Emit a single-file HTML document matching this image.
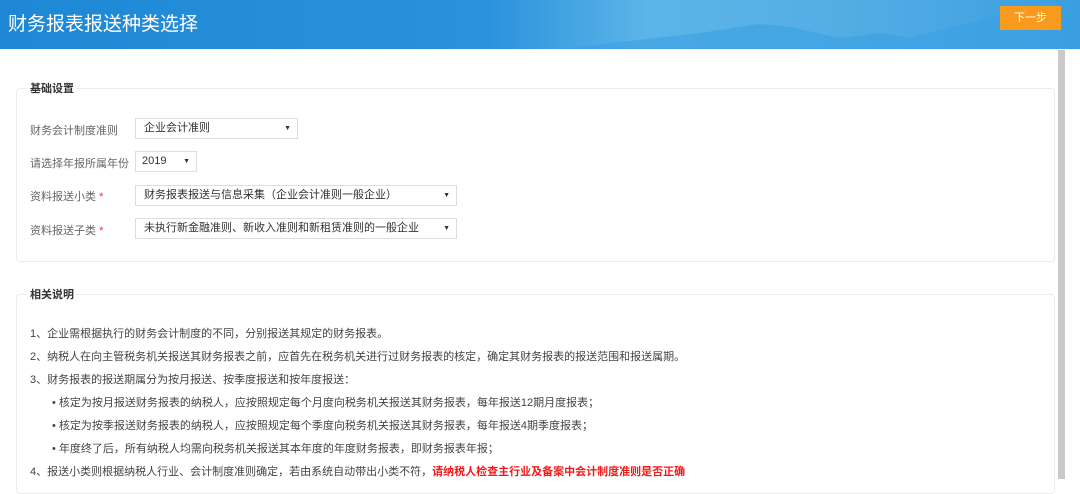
<!DOCTYPE html>
<html><head><meta charset="utf-8"><style>
*{margin:0;padding:0;box-sizing:border-box}
body{width:1080px;height:479px;overflow:hidden;background:#fff;font-family:"Liberation Sans","Noto Sans CJK SC",sans-serif;color:#555;font-size:11px;position:relative}
.hdr{position:absolute;left:0;top:0;width:1080px;height:49px;background:linear-gradient(90deg,#1e88d6 0%,#2a92dc 45%,#5db4e8 60%,#52ace4 80%,#3a9ee0 100%);overflow:hidden}
.hdr h1{position:absolute;left:8px;top:9px;font-size:19px;font-weight:normal;color:#fff}
.btn{position:absolute;left:1000px;top:6px;width:61px;height:24px;background:#f89a1c;color:#fff;font-size:11px;text-align:center;line-height:24px}
.sb{position:absolute;left:1058px;top:50px;width:7px;height:429px;background:#c9c9c9}
.box{position:absolute;left:16px;width:1039px;border:1px solid #ececec;border-radius:4px}
.lg{position:absolute;left:10px;top:-9px;background:#fff;padding:0 3px;font-weight:bold;color:#333;font-size:11px}
.lbl{position:absolute;left:30px;color:#666;font-size:11px}
.sel{position:absolute;left:135px;height:21px;border:1px solid #ddd;color:#333;padding-left:8px;line-height:19px;font-size:11px}
.sel:after{content:"▼";position:absolute;right:6px;top:0;font-size:7px;color:#333}
.req{color:#e33}
.t{position:absolute;left:30px;font-size:11px;color:#444;white-space:nowrap}
.b{left:52px}
.red{color:#f01a1a;font-weight:bold}
</style></head><body>
<div class="hdr">
<svg width="1080" height="49" style="position:absolute;left:0;top:0">
<path d="M560 49 L700 33 L760 24 L790 27 L840 38 L880 33 L910 38 L960 25 L1000 15 L1030 10 L1060 15 L1080 22 L1080 49Z" fill="#3aa0e2" opacity="0.6"/>
</svg>
<h1>财务报表报送种类选择</h1>
<div class="btn">下一步</div>
</div>
<div class="sb"></div>
<div class="box" style="top:88px;height:174px"><div class="lg">基础设置</div></div>
<div class="lbl" style="top:122px">财务会计制度准则</div>
<div class="sel" style="top:118px;width:163px">企业会计准则</div>
<div class="lbl" style="top:155px">请选择年报所属年份</div>
<div class="sel" style="top:151px;width:62px;padding-left:6px">2019</div>
<div class="lbl" style="top:188px">资料报送小类 <span class="req">*</span></div>
<div class="sel" style="top:185px;width:322px">财务报表报送与信息采集（企业会计准则一般企业）</div>
<div class="lbl" style="top:222px">资料报送子类 <span class="req">*</span></div>
<div class="sel" style="top:218px;width:322px">未执行新金融准则、新收入准则和新租赁准则的一般企业</div>
<div class="box" style="top:294px;height:200px"><div class="lg">相关说明</div></div>
<div class="t" style="top:325px">1、企业需根据执行的财务会计制度的不同，分别报送其规定的财务报表。</div>
<div class="t" style="top:348px">2、纳税人在向主管税务机关报送其财务报表之前，应首先在税务机关进行过财务报表的核定，确定其财务报表的报送范围和报送属期。</div>
<div class="t" style="top:371px">3、财务报表的报送期属分为按月报送、按季度报送和按年度报送：</div>
<div class="t b" style="top:394px">• 核定为按月报送财务报表的纳税人，应按照规定每个月度向税务机关报送其财务报表，每年报送12期月度报表；</div>
<div class="t b" style="top:417px">• 核定为按季报送财务报表的纳税人，应按照规定每个季度向税务机关报送其财务报表，每年报送4期季度报表；</div>
<div class="t b" style="top:440px">• 年度终了后，所有纳税人均需向税务机关报送其本年度的年度财务报表，即财务报表年报；</div>
<div class="t" style="top:463px">4、报送小类则根据纳税人行业、会计制度准则确定，若由系统自动带出小类不符，<span class="red">请纳税人检查主行业及备案中会计制度准则是否正确</span></div>
</body></html>
